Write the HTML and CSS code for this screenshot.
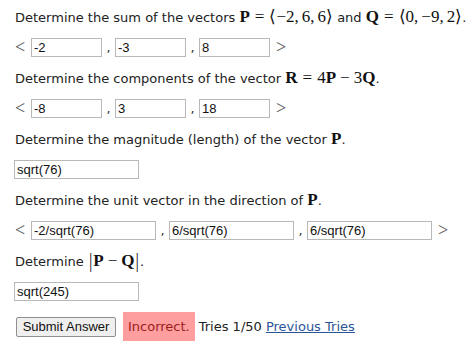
FILE: index.html
```html
<!DOCTYPE html>
<html>
<head>
<meta charset="utf-8">
<link rel="stylesheet" href="styles.css">
</head>
<body>
<div class="page">
  <div class="block">
    <p class="q">Determine the sum of the vectors <span class="m"><b>P</b><span class="rel">=</span>⟨−2,<span class="cs"></span>6,<span class="cs"></span>6⟩</span> and <span class="m"><b>Q</b><span class="rel">=</span>⟨0,<span class="cs"></span>−9,<span class="cs"></span>2⟩</span>.</p>
    <div class="row">
      <span class="br">&lt;</span>
      <input class="in sm" type="text" value="-2">
      <span class="sep">,</span>
      <input class="in sm" type="text" value="-3">
      <span class="sep">,</span>
      <input class="in sm" type="text" value="8">
      <span class="br end">&gt;</span>
    </div>
  </div>
  <div class="block">
    <p class="q">Determine the components of the vector <span class="m"><b>R</b><span class="rel">=</span>4<b>P</b><span class="bin">−</span>3<b>Q</b></span>.</p>
    <div class="row">
      <span class="br">&lt;</span>
      <input class="in sm" type="text" value="-8">
      <span class="sep">,</span>
      <input class="in sm" type="text" value="3">
      <span class="sep">,</span>
      <input class="in sm" type="text" value="18">
      <span class="br end">&gt;</span>
    </div>
  </div>
  <div class="block">
    <p class="q">Determine the magnitude (length) of the vector <span class="m"><b>P</b></span>.</p>
    <div class="row">
      <input class="in lg first" type="text" value="sqrt(76)">
    </div>
  </div>
  <div class="block">
    <p class="q">Determine the unit vector in the direction of <span class="m"><b>P</b></span>.</p>
    <div class="row">
      <span class="br">&lt;</span>
      <input class="in lg" type="text" value="-2/sqrt(76)">
      <span class="sep">,</span>
      <input class="in lg" type="text" value="6/sqrt(76)">
      <span class="sep">,</span>
      <input class="in lg" type="text" value="6/sqrt(76)">
      <span class="br end">&gt;</span>
    </div>
  </div>
  <div class="block">
    <p class="q">Determine <span class="m"><span class="bar">|</span><b>P</b><span class="bin">−</span><b>Q</b><span class="bar">|</span></span>.</p>
    <div class="row">
      <input class="in lg first" type="text" value="sqrt(245)">
    </div>
  </div>
  <div class="submit-row">
    <button class="btn" type="button">Submit Answer</button>
    <span class="bad">Incorrect.</span>
    <span class="tries">Tries 1/50 <a class="prev" href="#">Previous Tries</a></span>
  </div>
</div>
</body>
</html>
```

FILE: styles.css
```css
html, body {
  margin: 0;
  padding: 0;
  background: #ffffff;
}

.page {
  padding: 7px 0 0 15px;
  font-family: "DejaVu Sans", Verdana, sans-serif;
  font-size: 13px;
  color: #222222;
}

.block {
  display: flex;
  flex-direction: column;
  gap: 10px;
  margin-bottom: 11px;
}

.q {
  margin: 0;
  height: 20px;
  line-height: 20px;
  white-space: nowrap;
}

.m {
  font-family: "Liberation Serif", "Times New Roman", serif;
  font-size: 17px;
  color: #111111;
}

.m b {
  font-weight: bold;
}

.rel {
  margin: 0 5px;
}

.bin {
  margin: 0 4px;
}

.bar {
  display: inline-block;
  transform: scaleY(1.2);
  margin: 0 1px;
}

.cs {
  display: inline-block;
  width: 3px;
}

.row {
  display: flex;
  align-items: center;
  height: 20px;
}

.br {
  font-family: "Liberation Serif", "Times New Roman", serif;
  font-size: 18px;
  color: #555555;
  width: 16px;
  line-height: 20px;
}

.br.end {
  margin-left: 6px;
}

.sep {
  width: 13px;
  text-align: center;
  font-size: 13px;
  color: #333333;
}

.in {
  box-sizing: border-box;
  height: 19px;
  margin: 0;
  padding: 0 2px;
  border: 1px solid #b8b8b8;
  background: #ffffff;
  font-family: "Liberation Sans", Arial, sans-serif;
  font-size: 13px;
  color: #111111;
  outline: none;
}

.in.sm {
  width: 71px;
}

.in.lg {
  width: 125px;
}

.in.first {
  margin-left: -1px;
}

.submit-row {
  display: flex;
  align-items: center;
  height: 29px;
  margin-top: 4px;
}

.btn {
  box-sizing: border-box;
  width: 100px;
  height: 20px;
  margin: 0 7px 0 1px;
  padding: 0;
  font-family: "Liberation Sans", Arial, sans-serif;
  font-size: 13px;
  color: #111111;
  background: #efefef;
  border: 1px solid #8f8f8f;
  border-radius: 2px;
}

.bad {
  display: flex;
  align-items: center;
  height: 29px;
  padding: 0 5px;
  background: #ff9e9e;
  color: #9a1c1c;
}

.tries {
  margin-left: 4px;
}

.prev {
  color: #2b5597;
  text-decoration: underline;
}
```
